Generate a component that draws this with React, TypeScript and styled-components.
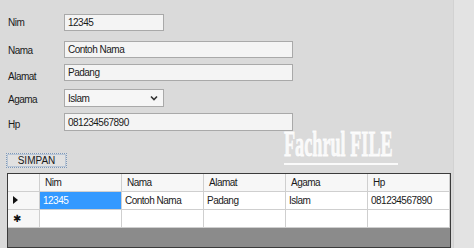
import React from "react";
import styled, { createGlobalStyle } from "styled-components";

const GlobalStyle = createGlobalStyle`
  html, body {
    margin: 0;
    padding: 0;
    background: #dadada;
    overflow: hidden;
  }
  * {
    box-sizing: border-box;
  }
`;

const FONT = `"Liberation Sans", Arial, sans-serif`;

type FieldType = {
  label: string;
  value: string;
  width: number;
  gap: number;
  dy: number;
  height: number;
  select?: boolean;
};

const FIELDS: FieldType[] = [
  { label: "Nim", value: "12345", width: 100, gap: 0, dy: 0, height: 17 },
  { label: "Nama", value: "Contoh Nama", width: 229, gap: 10, dy: 1, height: 17 },
  { label: "Alamat", value: "Padang", width: 229, gap: 6, dy: 4, height: 17 },
  { label: "Agama", value: "Islam", width: 100, gap: 8, dy: 2, height: 18, select: true },
  { label: "Hp", value: "081234567890", width: 229, gap: 6, dy: 3, height: 18 },
];

const COLUMNS = ["Nim", "Nama", "Alamat", "Agama", "Hp"];
const ROW = ["12345", "Contoh Nama", "Padang", "Islam", "081234567890"];

const App: React.FC = () => {
  return (
    <>
      <GlobalStyle />
      <Page>
        <Main>
          <Form>
            {FIELDS.map((f) => (
              <FieldRow key={f.label} $gap={f.gap} $height={f.height}>
                <Label $dy={f.dy}>{f.label}</Label>
                {f.select ? (
                  <Select $width={f.width}>
                    <span>{f.value}</span>
                    <svg width="8" height="6" viewBox="0 0 8 6">
                      <polyline points="1,1.5 4,4.5 7,1.5" fill="none" stroke="#333" strokeWidth="1.6" />
                    </svg>
                  </Select>
                ) : (
                  <TextBox $width={f.width}>{f.value}</TextBox>
                )}
              </FieldRow>
            ))}
          </Form>

          <SaveButton>SIMPAN</SaveButton>

          <Table>
            <TableGrid>
              <HeaderCell $rowHead />
              {COLUMNS.map((c) => (
                <HeaderCell key={c}>{c}</HeaderCell>
              ))}

              <RowHead>
                <svg width="6" height="8" viewBox="0 0 6 8">
                  <polygon points="0,0 5,4 0,8" fill="#111" />
                </svg>
              </RowHead>
              {ROW.map((v, i) => (
                <Cell key={i} $selected={i === 0}>{v}</Cell>
              ))}

              <RowHead>
                <NewMark>✱</NewMark>
              </RowHead>
              {COLUMNS.map((c) => (
                <Cell key={c} />
              ))}
            </TableGrid>
            <EmptyArea />
          </Table>

          <Watermark>
            <span>Fachrul FILE</span>
          </Watermark>
        </Main>
        <Strip />
      </Page>
    </>
  );
};

export default App;

const Page = styled.div`
  display: flex;
  width: 474px;
  height: 248px;
  font-family: ${FONT};
  font-size: 10px;
  letter-spacing: -0.5px;
  color: #1a1a1a;
`;

const Main = styled.div`
  position: relative;
  width: 453px;
  height: 248px;
  padding-top: 14px;
  display: flex;
  flex-direction: column;
  overflow: hidden;
`;

const Strip = styled.div`
  flex: 1;
  background: #e3e3e3;
  border-left: 1px solid #d2d2d2;
`;

const Form = styled.div`
  display: flex;
  flex-direction: column;
`;

const FieldRow = styled.div<{ $gap: number; $height: number }>`
  display: flex;
  align-items: flex-start;
  margin-top: ${(p) => p.$gap}px;
  height: ${(p) => p.$height}px;
`;

const Label = styled.div<{ $dy: number }>`
  width: 64px;
  padding-left: 8px;
  padding-top: ${(p) => p.$dy + 2}px;
  line-height: 13px;
`;

const TextBox = styled.div<{ $width: number }>`
  width: ${(p) => p.$width}px;
  height: 100%;
  background: #f4f4f4;
  border: 1px solid #a9a9a9;
  padding: 0 3px;
  display: flex;
  align-items: center;
`;

const Select = styled(TextBox)`
  justify-content: space-between;
  padding-right: 5px;
  background: #f6f6f6;
`;

const SaveButton = styled.div`
  margin: 22px 0 0 6px;
  width: 61px;
  height: 17px;
  background: #e1e1e1;
  border: 1px dotted #7d98b8;
  outline: 1px solid #b9c6d6;
  outline-offset: -2px;
  display: flex;
  align-items: center;
  justify-content: center;
  letter-spacing: 0;
`;

const Table = styled.div`
  margin: 5px 0 0 7px;
  width: 444px;
  height: 90px;
  border: 1px solid #3b3b3b;
  display: flex;
  flex-direction: column;
`;

const TableGrid = styled.div`
  display: grid;
  grid-template-columns: 32px repeat(5, 82px);
  grid-auto-rows: 18px;
  background: #ffffff;
`;

const HeaderCell = styled.div<{ $rowHead?: boolean }>`
  background: #f7f7f7;
  border-right: 1px solid #cfcfcf;
  border-bottom: 1px solid #cfcfcf;
  padding-left: ${(p) => (p.$rowHead ? 0 : 5)}px;
  display: flex;
  align-items: center;
`;

const RowHead = styled.div`
  background: #f7f7f7;
  border-right: 1px solid #cfcfcf;
  border-bottom: 1px solid #cfcfcf;
  display: flex;
  align-items: center;
  padding-left: 5px;
`;

const NewMark = styled.span`
  font-family: "DejaVu Sans", sans-serif;
  font-size: 10px;
  color: #111;
`;

const Cell = styled.div<{ $selected?: boolean }>`
  background: ${(p) => (p.$selected ? "#3399ff" : "#ffffff")};
  color: ${(p) => (p.$selected ? "#ffffff" : "#1a1a1a")};
  border-right: 1px solid #cfcfcf;
  border-bottom: 1px solid #cfcfcf;
  padding-left: 3px;
  display: flex;
  align-items: center;
  white-space: nowrap;
  overflow: hidden;
`;

const EmptyArea = styled.div`
  flex: 1;
  background: #8b8b8b;
`;

const Watermark = styled.div`
  position: absolute;
  left: 284px;
  top: 127px;
  width: 114px;
  height: 38px;
  border-bottom: 2px solid rgba(255, 255, 255, 0.85);

  span {
    display: inline-block;
    font-family: "Liberation Serif", "Times New Roman", serif;
    font-weight: bold;
    font-size: 35px;
    line-height: 36px;
    letter-spacing: 0;
    color: rgba(255, 255, 255, 0.85);
    -webkit-text-stroke: 0.8px rgba(255, 255, 255, 0.85);
    white-space: nowrap;
    transform: scaleX(0.52);
    transform-origin: left center;
  }
`;
